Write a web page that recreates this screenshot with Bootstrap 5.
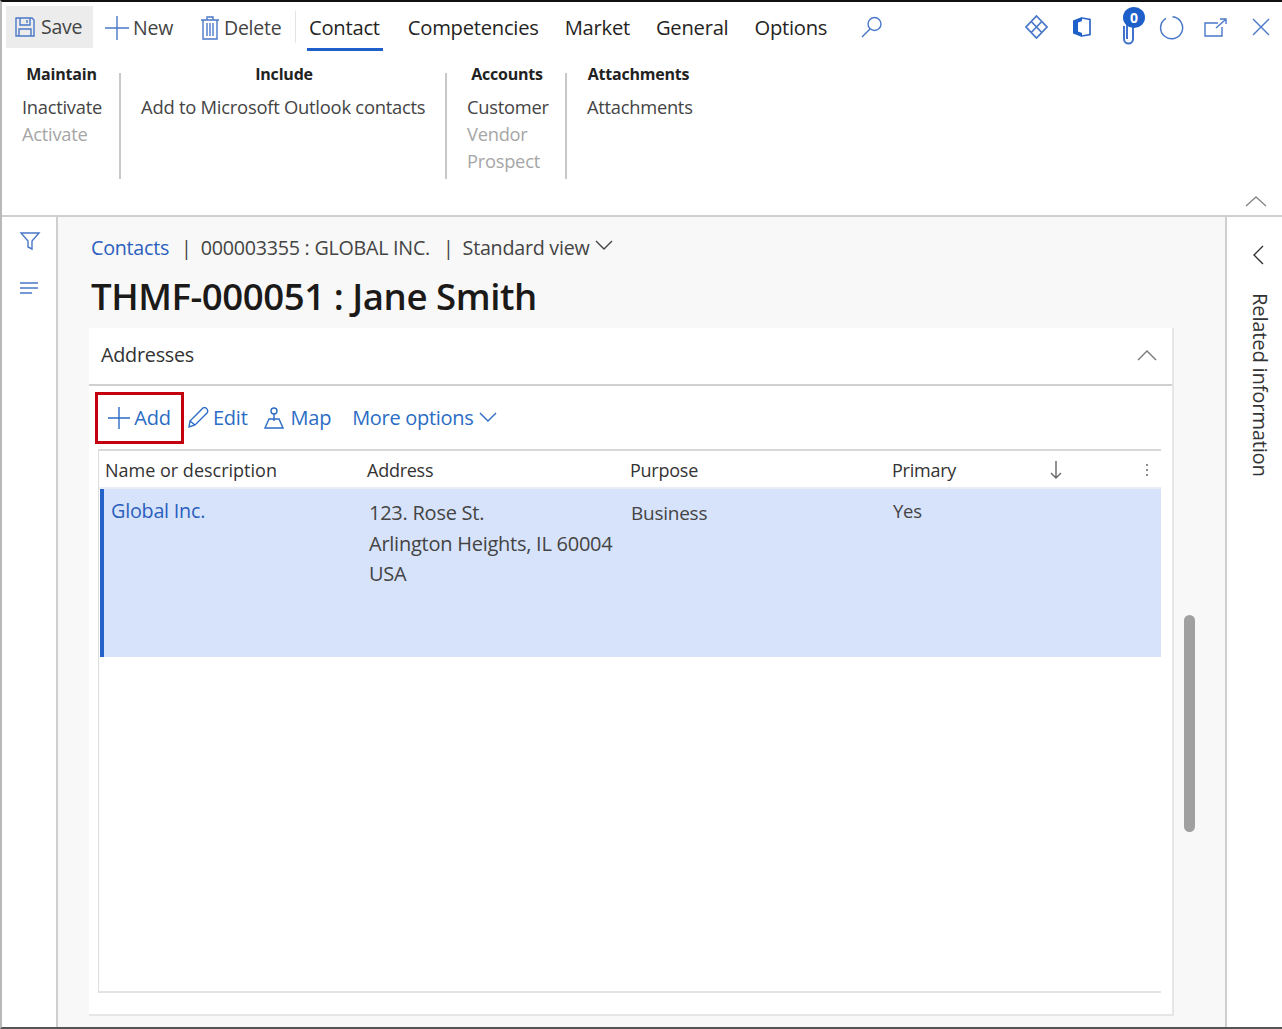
<!DOCTYPE html>
<html lang="en"><head><meta charset="utf-8"><title>Contact</title>
<link href="https://cdn.jsdelivr.net/npm/bootstrap@5.3.0/dist/css/bootstrap.min.css" rel="stylesheet">
<style>
html,body{height:100%}
body{margin:0;background:#fff;color:#323130;font-family:"Open Sans","Noto Sans",sans-serif;font-size:18.5px;letter-spacing:-.25px;overflow:hidden}
svg{display:block;flex:none;fill:none;stroke:currentColor;stroke-width:1.4}
.frame{width:1282px;height:1029px;border-top:2px solid #111;border-left:2px solid #b9b9b9;border-bottom:2px solid #555;display:flex;flex-direction:column}
.blue{color:#2b5fbd}.ic{color:#4a78c8}
.ribbon{height:215px;border-bottom:2px solid #cfcfcf;position:relative;flex:none}
.tabs{height:50px;align-items:center}
.cmd{height:40px;display:flex;align-items:center;gap:4px;color:#444;line-height:1;font-size:19.5px;padding-top:1px}
.save{background:#ececec;margin-left:4px;padding:0 10px 0 8px;width:87px;height:42px;gap:5px}
.newb{margin-left:12px;width:81px}.del{width:109px;padding-left:14px}
.vsep{width:1px;height:32px;background:#e4e4e4}
.tab{color:#252423;font-weight:500;font-size:20.2px;padding:1px 2px 0;margin-left:22px;height:47px;display:flex;align-items:center;position:relative}
.tab.on{margin-left:11px;margin-right:1px;padding-right:3px}
.tab.on::after{content:"";position:absolute;left:0;right:0;bottom:0;height:3px;background:#1f5fc9}
.search{margin-left:31px}
.right-ic{margin-left:auto;display:flex;align-items:center}
.i-diamond{margin-right:24px;stroke-width:1.8}.i-office{margin-right:30px;color:#2f66c8;stroke-width:1.7}.clip{margin-right:14px}.i-refresh{margin-right:20px;stroke-width:1.5}.i-pop{margin-right:25px}.i-x{margin-right:12px}
.groups{padding-top:11px}
.grp{text-align:left;padding:0 18px 0 20px}
.g1{width:117px}.g2{width:324px}.g3{width:118px}.g4{width:141px}
.gsep{width:2px;height:106px;margin-top:10px;background:#c8c8c8;flex:none}
.grp h6{font-size:16px;font-weight:700;color:#222;margin:0 0 8px;text-align:center;letter-spacing:-.2px;line-height:22px;white-space:nowrap}
.grp div{line-height:27px;white-space:nowrap;color:#444;font-size:18.3px}
.grp.g2 div{font-size:18.4px}
.grp .off{color:#a6a6a6}
.collapse-up{position:absolute;right:15px;bottom:8px;color:#888}
.body-row{flex:1;min-height:0}
.rail{width:56px;border-right:2px solid #cfcfcf;flex:none;padding:14px 0 0 17px;gap:30px}
.main{flex:1;background:#f8f8f8;padding:0 0 11px 31px;position:relative;min-width:0;display:flex;flex-direction:column}
.crumb{height:60px;padding:2px 0 0 2px;align-items:center;color:#444;white-space:nowrap;font-size:19.7px}
.crumb .pipe{margin:0 9px 0 12px}
.crumb .pipe2{margin:0 9px 0 13px}
.crumb svg{margin:-5px 0 0 6px}
.title{font-size:36.6px;font-weight:600;color:#1b1a19;margin:-1px 0 0 2px;line-height:40px;height:52px;letter-spacing:-.45px}
.panel{width:1085px;flex:1;background:#fff;border:0;border-right:2px solid #e6e6e6;border-bottom:2px solid #e6e6e6;border-radius:0;min-height:0;display:flex;flex-direction:column}
.phead{height:58px;border-bottom:2px solid #d0d0d0;padding:0 15px 2px 12px;font-weight:500;color:#333;font-size:19.8px;flex:none}
.phead svg{color:#777}
.tools{height:63px;padding:0 0 0 6px;position:relative;flex:none;color:#2b6cc4;font-size:20px}
.tool{display:flex;align-items:center;gap:4px;line-height:1}
.redbox{width:89px;height:52px;border:3px solid #c4000e;justify-content:center;margin-right:3px}
.t-map{margin-right:21px;gap:7px}
.t-more{gap:2px;letter-spacing:-.3px}
.grid{margin:0 11px 21px 9px;border-left:1px solid #ddd;border-bottom:2px solid #e3e3e3;flex:1}
.ghead{display:grid;grid-template-columns:262px 263px 262px 1fr;height:40px;border-top:2px solid #d8d8d8;border-bottom:2px solid #e9edf5;align-items:center;padding:2px 0 0 6px;font-size:18px;font-weight:500;color:#333;position:relative}
.ghead .n{letter-spacing:0}
.grow{display:grid;grid-template-columns:258px 262px 262px 1fr;height:168px;background:#d7e3fb;border-left:4px solid #2461c8;margin-left:1px;padding-left:7px;color:#444}
.grow>div{padding-top:7px;line-height:30.5px}
.grow .c1{font-size:19.8px}
.grow .addr{padding-top:9px;font-size:20px}
.grow .biz{padding-top:9px;font-size:19px}
.sort{position:absolute;left:951px;top:9px;color:#666}
.dots{position:absolute;left:1046px;top:12px;color:#666;stroke:none;fill:currentColor}
.thumb{position:absolute;left:1126px;top:398px;width:11px;height:217px;border-radius:6px;background:#a0a0a0}
.side{width:57px;border-left:2px solid #cfcfcf;flex:none;padding:28px 0 0 25px;color:#333}
.vert{writing-mode:vertical-rl;align-self:flex-start;margin-top:28px;margin-left:-3px;font-size:20.3px;font-weight:500;white-space:nowrap;line-height:24px}
.clip{position:relative;width:24px;height:30px}
.clip svg{position:absolute;left:0;top:7px;stroke-width:2;color:#3f72cc}
.badge0{position:absolute;left:2px;top:-5px;background:#1f5fc9;color:#fff;width:22px;height:21px;border-radius:50%;font-size:14px;font-weight:700;line-height:21px;text-align:center;letter-spacing:0}
a{color:inherit;text-decoration:none}
</style></head><body>
<div class="frame">
<div class="ribbon">
 <div class="d-flex tabs">
  <div class="cmd save"><svg class="ic" width="22" height="22" viewBox="0 0 22 22"><path d="M2 2h16l2 2v16H2zM6 2v7h10V2M5 20v-7h12v7M13 4v3"/></svg><span>Save</span></div>
  <div class="cmd newb"><svg class="ic" width="24" height="24" viewBox="0 0 24 24"><path d="M12 0v24M0 12h24"/></svg><span>New</span></div>
  <div class="cmd del"><svg class="ic" width="20" height="24" viewBox="0 0 20 24"><path d="M1 4h18M7 4V1h6v3M3 4v19h14V4M7 7v13M10 7v13M13 7v13"/></svg><span>Delete</span></div>
  <div class="vsep"></div>
  <div class="tab on">Contact</div><div class="tab">Competencies</div><div class="tab">Market</div><div class="tab">General</div><div class="tab">Options</div>
  <svg class="ic search" width="24" height="24" viewBox="0 0 24 24"><circle cx="14.500" cy="9" r="6.500"/><path d="M10 14l-8 8"/></svg>
  <div class="right-ic ic">
   <svg class="i-diamond" width="23" height="24" viewBox="0 0 23 24"><path d="M11.500 1L22 12 11.500 23 1 12zM6.250 6.500l10.500 11M16.750 6.500L6.250 17.500"/></svg>
   <svg class="i-office" width="19" height="22" viewBox="0 0 19 22"><path d="M10 1L1 4.500v13L10 21v-4l-4-1.500v-9L10 5z" fill="#1f5fc9" stroke="none"/><path d="M10 2l8 1.500v15L10 20"/></svg>
   <div class="clip"><svg width="16" height="26" viewBox="0 0 16 26"><path d="M3 7v13a4.500 4.500 0 0 0 9 0V8a3 3 0 0 0-6 0v12"/></svg><span class="badge0">0</span></div>
   <svg class="i-refresh" width="25" height="25" viewBox="0 0 25 25"><path d="M13.500 1.800a11 11 0 1 1-6.500 1.500"/></svg>
   <svg class="i-pop" width="23" height="20" viewBox="0 0 23 20"><path d="M14 6H1v13h17V10M12 11l9-8M16 2h6v5"/></svg>
   <svg class="i-x" width="18" height="18" viewBox="0 0 18 18"><path d="M1 1l16 16M17 1L1 17"/></svg>
  </div>
 </div>
 <div class="d-flex groups">
  <div class="grp g1"><h6>Maintain</h6><div>Inactivate</div><div class="off">Activate</div></div><div class="gsep"></div>
  <div class="grp g2"><h6>Include</h6><div>Add to Microsoft Outlook contacts</div></div><div class="gsep"></div>
  <div class="grp g3"><h6>Accounts</h6><div>Customer</div><div class="off">Vendor</div><div class="off">Prospect</div></div><div class="gsep"></div>
  <div class="grp g4"><h6>Attachments</h6><div>Attachments</div></div>
 </div>
 <svg class="collapse-up" width="22" height="12" viewBox="0 0 22 12"><path d="M1 11L11 2l10 9"/></svg>
</div>
<div class="d-flex body-row">
 <div class="rail d-flex flex-column ic">
  <svg width="22" height="20" viewBox="0 0 22 20"><path d="M2 2h18l-7 8v8l-4-2v-6z"/></svg>
  <svg width="20" height="14" viewBox="0 0 20 14"><path d="M1 2h18M1 7h18M1 12h12"/></svg>
 </div>
 <div class="main">
  <div class="d-flex crumb"><a class="blue" href="#">Contacts</a><span class="pipe">|</span><span>000003355 : GLOBAL INC.</span><span class="pipe2">|</span><span>Standard view</span><svg width="18" height="11" viewBox="0 0 18 11"><path d="M1 1l8 8 8-8"/></svg></div>
  <h1 class="title">THMF-000051 : Jane Smith</h1>
  <div class="card panel">
   <div class="d-flex align-items-center justify-content-between phead"><span>Addresses</span><svg width="20" height="12" viewBox="0 0 20 12"><path d="M1 11l9-9 9 9"/></svg></div>
   <div class="d-flex align-items-center tools">
    <div class="tool redbox d-flex"><svg width="22" height="22" viewBox="0 0 22 22"><path d="M11 0v22M0 11h22"/></svg><span>Add</span></div>
    <div class="tool me-3"><svg width="22" height="22" viewBox="0 0 22 22"><path d="M2 20l1-6L15 2a2.800 2.800 0 0 1 5 4L8 18zM3 14l5 4"/></svg><span>Edit</span></div>
    <div class="tool t-map"><svg width="20" height="24" viewBox="0 0 20 24"><circle cx="10" cy="5" r="3"/><path d="M10 8v7M5 13L1 22h18l-4-9z"/></svg><span>Map</span></div>
    <div class="tool t-more"><span>More options</span><svg class="ms-1" width="18" height="11" viewBox="0 0 18 11"><path d="M1 1l8 8 8-8"/></svg></div>
   </div>
   <div class="grid">
    <div class="ghead"><div class="n">Name or description</div><div>Address</div><div>Purpose</div><div>Primary</div>
     <svg class="sort" width="12" height="20" viewBox="0 0 12 20"><path d="M6 1v17M1 13l5 5 5-5"/></svg>
     <svg class="dots" width="4" height="14" viewBox="0 0 4 14"><circle cx="2" cy="2" r="1"/><circle cx="2" cy="7" r="1"/><circle cx="2" cy="12" r="1"/></svg>
    </div>
    <div class="grow"><div class="blue c1">Global Inc.</div><div class="addr">123. Rose St.<br>Arlington Heights, IL 60004<br>USA</div><div class="biz">Business</div><div>Yes</div></div>
   </div>
  </div>
  <div class="thumb"></div>
 </div>
 <div class="side d-flex flex-column"><svg width="12" height="20" viewBox="0 0 12 20"><path d="M11 1L2 10l9 9"/></svg><div class="vert">Related information</div></div>
</div>
</div>
</body></html>
